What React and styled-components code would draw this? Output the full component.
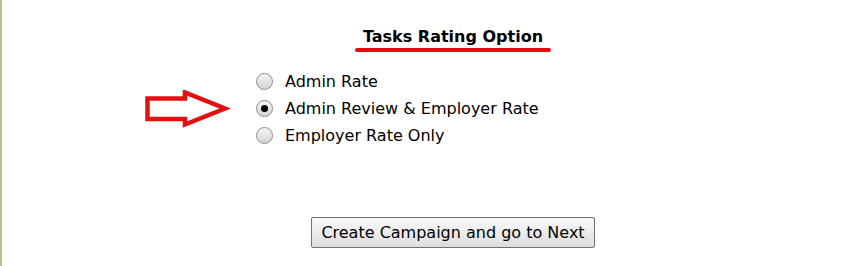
import React, { useState } from "react";
import styled, { createGlobalStyle } from "styled-components";

const GlobalStyle = createGlobalStyle`
  html, body {
    margin: 0;
    padding: 0;
    background: #ffffff;
  }
  body {
    font-family: "DejaVu Sans", Verdana, sans-serif;
    color: #000;
  }
`;

const options = [
  { id: "admin", label: "Admin Rate" },
  { id: "review", label: "Admin Review & Employer Rate" },
  { id: "employer", label: "Employer Rate Only" },
];

const App = () => {
  const [selected, setSelected] = useState("review");

  return (
    <>
      <GlobalStyle />
      <Page>
        <Content>
          <Title>Tasks Rating Option</Title>
          <OptionRow>
            <ArrowMark />
            <RadioList>
              {options.map((opt) => (
                <RadioLine key={opt.id} onClick={() => setSelected(opt.id)}>
                  <RadioDot $checked={selected === opt.id} />
                  <RadioLabel>{opt.label}</RadioLabel>
                </RadioLine>
              ))}
            </RadioList>
          </OptionRow>
          <SubmitBtn>Create Campaign and go to Next</SubmitBtn>
        </Content>
      </Page>
    </>
  );
};

const ArrowMark = () => (
  <ArrowSvg width="86" height="38" viewBox="0 0 86 38">
    <path
      d="M2.5 8.5 H40 V2.5 L80 18.5 L40 34.5 V29 H2.5 Z"
      fill="none"
      stroke="#e41010"
      strokeWidth="4.5"
      strokeLinejoin="miter"
    />
  </ArrowSvg>
);

export default App;

const Page = styled.div`
  width: 856px;
  height: 266px;
  box-sizing: border-box;
  border-left: 2px solid #b9c08f;
  overflow: hidden;
`;

const Content = styled.div`
  display: flex;
  flex-direction: column;
  align-items: center;
  padding: 27px 0 0 48px;
`;

const Title = styled.div`
  position: relative;
  font-size: 16px;
  font-weight: 700;
  line-height: 20px;
  padding: 0 8px 5px;

  &::after {
    content: "";
    position: absolute;
    left: 0;
    right: 0;
    bottom: 0;
    height: 4px;
    border-radius: 2px;
    background: #e30b0b;
  }
`;

const OptionRow = styled.div`
  display: flex;
  align-items: center;
  align-self: flex-start;
  margin: 19px 0 0 95px;
  gap: 25px;
`;

const ArrowSvg = styled.svg`
  display: block;
  margin-top: 0;
`;

const RadioList = styled.div`
  display: flex;
  flex-direction: column;
  gap: 6px;
`;

const RadioLine = styled.label`
  display: flex;
  align-items: center;
  gap: 12px;
  height: 21px;
  cursor: pointer;
`;

const RadioDot = styled.span`
  width: 15px;
  height: 15px;
  border-radius: 50%;
  border: 1px solid #8c8c8c;
  background: linear-gradient(#f6f6f6, #d4d4d4);
  position: relative;
  flex: none;

  &::after {
    content: "";
    display: ${({ $checked }) => ($checked ? "block" : "none")};
    position: absolute;
    left: 4px;
    top: 4px;
    width: 7px;
    height: 7px;
    border-radius: 50%;
    background: #000;
  }
`;

const RadioLabel = styled.span`
  font-size: 16px;
  line-height: 21px;
`;

const SubmitBtn = styled.button`
  margin-top: 71px;
  height: 31px;
  padding: 0 9px;
  font-family: "DejaVu Sans", Verdana, sans-serif;
  font-size: 16px;
  color: #000;
  border: 1px solid #707070;
  border-radius: 2px;
  background: linear-gradient(#f8f8f8 0%, #ececec 50%, #dcdcdc 100%);
`;
